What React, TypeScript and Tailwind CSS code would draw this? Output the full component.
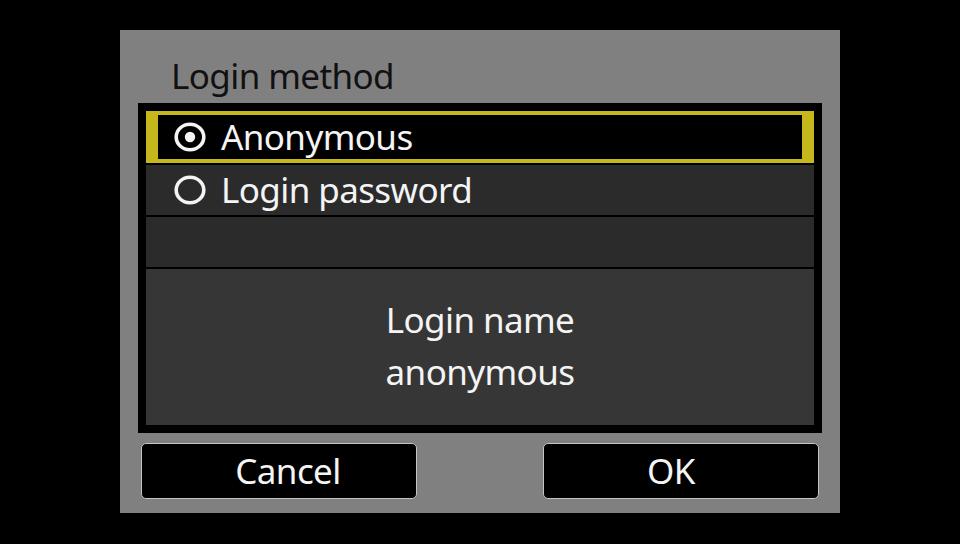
import React from 'react';

function Radio({ checked }: { checked: boolean }) {
    return (
        <svg className="w-[32px] h-[30px] shrink-0" viewBox="0 0 32 30">
            <ellipse cx="16" cy="15" rx="13.8" ry="12.8" fill="none" stroke="#f4f4f4" strokeWidth={3.6} />
            {checked && <circle cx="16" cy="15" r="5.2" fill="#f4f4f4" />}
        </svg>
    );
}

function App() {
    return (
        <div className="w-[960px] h-[544px] bg-black flex justify-center pt-[30px] font-['Noto_Sans',sans-serif] text-[35px] tracking-[-0.6px]">
            <div className="w-[720px] h-[483px] bg-[#808080] flex flex-col">
                <div className="h-[73px] pt-[26px] pl-[51px] leading-[40px] text-[#111111]">
                    Login method
                </div>

                <div className="mx-[18px] h-[330px] bg-black p-2 flex flex-col gap-[2px]">
                    <div className="h-[52px] flex items-center bg-black border-x-[12px] border-y-4 border-[#c6b81c] pl-[16px] text-[#f4f4f4]">
                        <Radio checked />
                        <span className="ml-[15px]">Anonymous</span>
                    </div>
                    <div className="h-[50px] flex items-center bg-[#2b2b2b] pl-[28px] text-[#f4f4f4]">
                        <Radio checked={false} />
                        <span className="ml-[15px]">Login password</span>
                    </div>
                    <div className="h-[50px] bg-[#2b2b2b]"></div>
                    <div className="flex-1 bg-[#363636] flex flex-col items-center justify-center pb-[2px] leading-[52px] text-[#f4f4f4]">
                        <span>Login name</span>
                        <span>anonymous</span>
                    </div>
                </div>

                <div className="flex justify-between px-[21px] mt-[10px]">
                    <button className="w-[276px] h-[56px] bg-black border-[1.5px] border-[#c4c4c4] rounded-[5px] pl-[18px] text-[#f4f4f4] flex items-center justify-center">
                        Cancel
                    </button>
                    <button className="w-[276px] h-[56px] bg-black border-[1.5px] border-[#c4c4c4] rounded-[5px] pr-[20px] text-[#f4f4f4] flex items-center justify-center">
                        OK
                    </button>
                </div>
            </div>
        </div>
    );
}

export default App;
